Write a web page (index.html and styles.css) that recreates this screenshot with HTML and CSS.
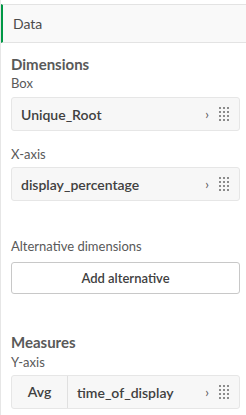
FILE: index.html
```html
<!DOCTYPE html>
<html lang="en">
  <head>
    <meta charset="UTF-8" />
    <meta name="viewport" content="width=device-width, initial-scale=1.0" />
    <title>Data properties</title>
    <link rel="stylesheet" href="styles.css">
  </head>
  <body>
    <div class="panel">
      <!-- Section header -->
      <div class="tab">Data</div>

      <div class="content">
        <!-- Dimensions -->
        <h2 class="section-title">Dimensions</h2>
        <div class="label">Box</div>
        <div class="field">
          <span class="field-name">Unique_Root</span>
          <span class="chevron">&#8250;</span>
          <span class="grip"><i></i><i></i><i></i><i></i><i></i><i></i><i></i><i></i><i></i><i></i><i></i><i></i></span>
        </div>

        <div class="label">X-axis</div>
        <div class="field">
          <span class="field-name">display_percentage</span>
          <span class="chevron">&#8250;</span>
          <span class="grip"><i></i><i></i><i></i><i></i><i></i><i></i><i></i><i></i><i></i><i></i><i></i><i></i></span>
        </div>

        <div class="label alt-label">Alternative dimensions</div>
        <button class="btn">Add alternative</button>

        <!-- Measures -->
        <h2 class="section-title measures">Measures</h2>
        <div class="label">Y-axis</div>
        <div class="field">
          <span class="agg">Avg</span>
          <span class="field-name">time_of_display</span>
          <span class="chevron">&#8250;</span>
          <span class="grip"><i></i><i></i><i></i><i></i><i></i><i></i><i></i><i></i><i></i><i></i><i></i><i></i></span>
        </div>
      </div>
    </div>
  </body>
</html>
```

FILE: styles.css
```css
* {
  box-sizing: border-box;
}

body {
  margin: 0;
  padding: 0;
  background-color: #ffffff;
  font-family: Lato, "Open Sans", sans-serif;
  color: #595959;
  overflow: hidden;
}

.panel {
  width: 246px;
  height: 415px;
  padding-top: 4px;
  border-left: 1px solid #e6e6e6;
}

.tab {
  height: 39px;
  line-height: 37px;
  padding-left: 10px;
  background-color: #f9f9f9;
  border-top: 1px solid #e3e3e3;
  border-bottom: 1px solid #e3e3e3;
  border-left: 2px solid #009845;
  font-size: 14px;
  color: #4a4a4a;
}

.content {
  padding: 0 6px 0 10px;
}

.section-title {
  margin: 11px 0 0;
  font-size: 15px;
  font-weight: 700;
  color: #595959;
  line-height: 20px;
}

.measures {
  margin-top: 38px;
}

.label {
  font-size: 13px;
  line-height: 18px;
  color: #595959;
  margin-bottom: 5px;
}

.field + .label {
  margin-top: 14px;
  margin-bottom: 4px;
}

.measures + .label {
  margin-top: 1px;
  margin-bottom: 4px;
}

.alt-label {
  margin-top: 36px !important;
  margin-bottom: 7px !important;
}

.field {
  display: flex;
  align-items: center;
  height: 34px;
  background-color: #f7f7f7;
  border: 1px solid #e6e6e6;
  border-radius: 3px;
  color: #404040;
}

.field-name {
  flex: 1;
  padding-left: 9px;
  font-size: 14px;
  font-weight: 600;
}

.agg {
  width: 56px;
  height: 100%;
  line-height: 32px;
  text-align: center;
  border-right: 1px solid #e0e0e0;
  font-size: 14px;
  font-weight: 600;
}

.chevron {
  font-size: 13px;
  color: #595959;
  margin-right: 10px;
}

.grip {
  display: grid;
  grid-template-columns: repeat(3, 2px);
  grid-auto-rows: 2px;
  gap: 2px;
  margin-right: 10px;
}

.grip i {
  background-color: #8c8c8c;
}

.btn {
  display: block;
  width: 100%;
  height: 32px;
  background-color: #ffffff;
  border: 1px solid #c8c8c8;
  border-radius: 3px;
  font-family: inherit;
  font-size: 13px;
  font-weight: 600;
  color: #404040;
}
```
